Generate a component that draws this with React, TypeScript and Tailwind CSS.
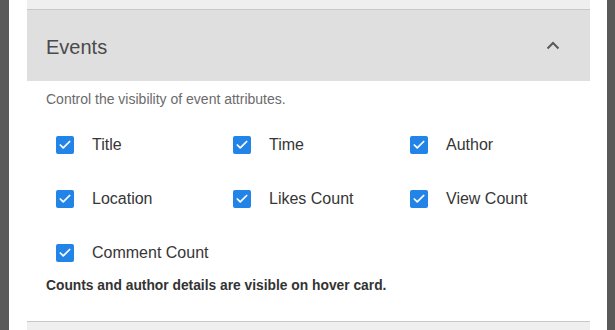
import { Check } from 'lucide-react';

const fields = ['Title', 'Time', 'Author', 'Location', 'Likes Count', 'View Count', 'Comment Count'];

export default function App() {
  return (
    <div
      className="w-[615px] h-[330px] overflow-hidden bg-[#595959] flex pl-[9px] pr-[8px]"
      style={{ fontFamily: '"Liberation Sans", Arial, sans-serif' }}
    >
      {/* Modal */}
      <div className="flex-1 bg-white pl-[18px] pr-[17px] flex flex-col">
        {/* Previous accordion (collapsed) */}
        <div className="h-[10px] bg-[#efefef] border-b border-[#c8c8c8]" />

        {/* Events header */}
        <div className="h-[71px] bg-[#dfdfdf] flex items-center justify-between pl-[19px] pr-[30px]">
          <span className="text-[20px] leading-[24px] pt-[2px] text-[#4a4a4a]">Events</span>
          <svg width="14" height="9" viewBox="0 0 14 9" fill="none">
            <path d="M1.5 7.5L7 2l5.5 5.5" stroke="#5a5a5a" strokeWidth="2" />
          </svg>
        </div>

        {/* Content */}
        <div className="pl-[19px] pt-[9px] pb-[27px]">
          <p className="text-[14px] leading-[18px] text-[#6b6b6b]">Control the visibility of event attributes.</p>
          <div className="grid grid-cols-[177px_177px_177px] gap-y-[14px] ml-[10px] mt-[17px]">
            {fields.map((f) => (
              <label key={f} className="h-[40px] flex items-center gap-[18px]">
                <span className="w-[18px] h-[18px] rounded-[2px] bg-[#2384e8] flex items-center justify-center">
                  <Check size={14} strokeWidth={3} className="text-white" />
                </span>
                <span className="text-[16px] text-[#363636]">{f}</span>
              </label>
            ))}
          </div>
          <p className="mt-[5px] text-[13.8px] leading-[16px] font-bold text-[#333]">
            Counts and author details are visible on hover card.
          </p>
        </div>

        {/* Next accordion (collapsed) */}
        <div className="flex-1 bg-[#efefef] border-t border-[#c8c8c8]" />
      </div>
    </div>
  );
}
